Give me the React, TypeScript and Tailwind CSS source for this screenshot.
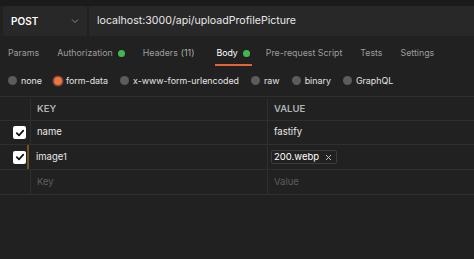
import React from 'react'

const font = { fontFamily: 'Inter, "Noto Sans", sans-serif' }

function Check() {
  return (
    <div className="w-[13px] h-[13px] rounded-[2px] bg-white flex items-center justify-center">
      <svg width="10" height="10" viewBox="0 0 10 10" fill="none">
        <path d="M1.8 5.2 L4 7.4 L8.3 2.6" stroke="#111" strokeWidth="1.7" strokeLinecap="round" strokeLinejoin="round" />
      </svg>
    </div>
  )
}

function Radio({ label, active }: { label: string; active?: boolean }) {
  return (
    <div className="flex items-center gap-[4px]">
      {active ? (
        <span className="w-[8px] h-[8px] rounded-full bg-[#f0743f] ring-[1.5px] ring-[#7a4a36]" />
      ) : (
        <span className="w-[9px] h-[9px] rounded-full bg-[#5c5c5c]" />
      )}
      <span className="text-[#e4e4e4]">{label}</span>
    </div>
  )
}

export default function App() {
  const tabs = [
    { label: 'Params' },
    { label: 'Authorization', dot: true },
    { label: 'Headers', count: '(11)' },
    { label: 'Body', dot: true, active: true },
    { label: 'Pre-request Script' },
    { label: 'Tests' },
    { label: 'Settings' },
  ]

  return (
    <div className="w-[474px] h-[259px] bg-[#212121] text-[9.5px] overflow-hidden" style={font}>
      {/* top strip */}
      <div className="h-[6px] bg-[#1b1b1b]" />

      {/* request url bar */}
      <div className="flex h-[30px] pl-[3px] gap-[2px]">
        <div className="w-[84px] bg-[#282828] rounded-l-[3px] flex items-center justify-between pl-[8px] pr-[8px]">
          <span className="text-white font-semibold text-[10px]">POST</span>
          <svg width="8" height="6" viewBox="0 0 8 6" fill="none">
            <path d="M1 1.5 L4 4.5 L7 1.5" stroke="#8a8a8a" strokeWidth="1" />
          </svg>
        </div>
        <div className="flex-1 bg-[#282828] flex items-center pl-[8px]">
          <span className="text-[#e8e8e8] text-[10.6px]">localhost:3000/api/uploadProfilePicture</span>
        </div>
      </div>

      {/* tabs */}
      <div className="flex h-[30px] pl-[8px] gap-[18px] text-[8.8px]">
        {tabs.map((t) => (
          <div
            key={t.label}
            className={`relative flex items-center gap-[5px] pt-[4px] ${t.active ? 'ml-[4px] mr-[-2px]' : ''}`}
          >
            <span className={t.active ? 'text-white' : 'text-[#9d9d9d]'}>{t.label}</span>
            {t.count && <span className="text-[#a9b7a8] -ml-[2px]">{t.count}</span>}
            {t.dot && <span className="w-[7px] h-[7px] rounded-full bg-[#3fb950]" />}
            {t.active && <span className="absolute left-[-1px] right-[-2px] bottom-0 h-[2px] bg-[#e6633a]" />}
          </div>
        ))}
      </div>

      {/* body type radios */}
      <div className="flex items-center h-[30px] pl-[8px] gap-[12px] text-[8.9px]">
        <Radio label="none" />
        <Radio label="form-data" active />
        <Radio label="x-www-form-urlencoded" />
        <Radio label="raw" />
        <Radio label="binary" />
        <Radio label="GraphQL" />
      </div>

      {/* form table */}
      <div className="border-t border-[#2f2f2f]">
        <div className="grid grid-cols-[30px_237px_1fr] h-[24px] border-b border-[#2f2f2f] pt-[2px]">
          <div />
          <div className="border-l border-[#2f2f2f] flex items-center pl-[6px] text-[#b3b3b3] font-semibold">KEY</div>
          <div className="border-l border-[#2f2f2f] flex items-center pl-[6px] text-[#b3b3b3] font-semibold">VALUE</div>
        </div>
        <div className="grid grid-cols-[30px_237px_1fr] h-[24px] border-b border-[#2f2f2f]">
          <div className="flex items-center pl-[13px]"><Check /></div>
          <div className="border-l border-[#2f2f2f] flex items-center pl-[6px] text-[#e8e8e8]">name</div>
          <div className="border-l border-[#2f2f2f] flex items-center pl-[6px] text-[#e8e8e8]">fastify</div>
        </div>
        <div className="grid grid-cols-[30px_237px_1fr] h-[25px] border-b border-[#2f2f2f]">
          <div className="flex items-center pl-[13px]"><Check /></div>
          <div className="border-l-2 border-[#6b5525] -ml-[3px] pl-[7px] flex items-center text-[#e8e8e8]">image1</div>
          <div className="border-l border-[#2f2f2f] flex items-center pl-[3px]">
            <div className="flex items-center gap-[6px] h-[14px] border border-[#3c3c3c] rounded-[2px] pl-[2px] pr-[4px] text-white text-[9.5px]">
              <span>200.webp</span>
              <svg width="7" height="7" viewBox="0 0 7 7" fill="none">
                <path d="M1 1 L6 6 M6 1 L1 6" stroke="#bdbdbd" strokeWidth="1" />
              </svg>
            </div>
          </div>
        </div>
        <div className="grid grid-cols-[30px_237px_1fr] h-[25px] border-b border-[#2f2f2f]">
          <div />
          <div className="border-l border-[#2f2f2f] flex items-center pl-[6px] text-[#5e5e5e]">Key</div>
          <div className="border-l border-[#2f2f2f] flex items-center pl-[6px] text-[#5e5e5e]">Value</div>
        </div>
      </div>
    </div>
  )
}
